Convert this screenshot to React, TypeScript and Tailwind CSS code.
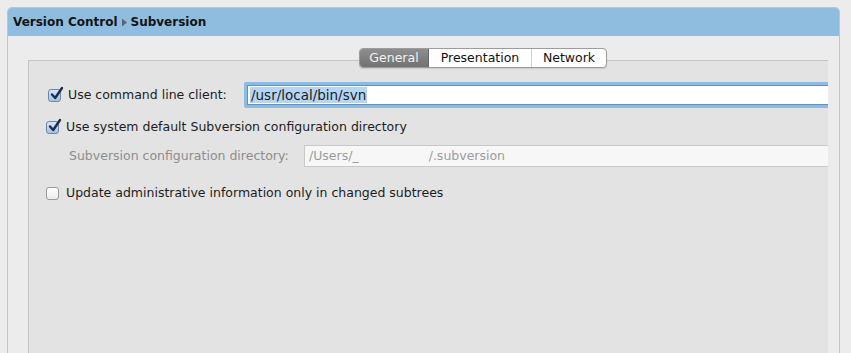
import React from 'react'

const font = { fontFamily: '"DejaVu Sans", "Liberation Sans", sans-serif' }

function Checkbox({ checked }: { checked: boolean }) {
  if (!checked) {
    return (
      <span className="inline-block w-[13px] h-[13px] rounded-[3px] border border-[#9a9a9a] bg-gradient-to-b from-white to-[#ececec] shrink-0" />
    )
  }
  return (
    <span className="relative inline-block w-[13px] h-[13px] rounded-[3px] border border-[#6c88a8] bg-gradient-to-b from-[#d6e6f6] to-[#9fc3e8] shrink-0">
      <svg className="absolute left-[1px] -top-[4px]" width="14" height="15" viewBox="0 0 14 15">
        <path d="M2 8.5 L5.2 12 L12 2" fill="none" stroke="#1d2c4a" strokeWidth="2.4" strokeLinecap="round" strokeLinejoin="round" />
      </svg>
    </span>
  )
}

export default function App() {
  return (
    <div className="w-[851px] h-[353px] overflow-hidden bg-[#ececec] pt-[7px] pl-[7px] text-[12.5px] text-[#1c1c1c]" style={font}>
      <div className="w-[833px] h-[346px] border-l border-r border-t border-[#c4c4c4] rounded-t-[5px] flex flex-col">
        {/* header */}
        <div className="h-[28px] bg-[#8fbde0] rounded-t-[4px] flex items-center pl-[5px] font-bold text-[12px] text-[#141414] shrink-0">
          <span>Version Control</span>
          <svg className="ml-[4px] mr-[4px]" width="5" height="9" viewBox="0 0 5 9">
            <path d="M0 0.5 L5 4.5 L0 8.5 Z" fill="#5c6670" />
          </svg>
          <span>Subversion</span>
        </div>

        <div className="flex-1 pl-[20px] pr-[11px] pt-[12px] flex flex-col">
          {/* tabs */}
          <div className="relative z-10 flex pl-[331px]">
            <div className="flex h-[20px] rounded-[4px] border border-[#9c9c9c] bg-white overflow-hidden shadow-[0_1px_1px_rgba(0,0,0,0.12)]">
              <div className="w-[69px] flex items-center justify-center bg-gradient-to-b from-[#8e8e8e] to-[#727272] text-[#f2f2f2] border-r border-[#6a6a6a]">General</div>
              <div className="w-[103px] flex items-center justify-center border-r border-[#d0d0d0] text-[#111]">Presentation</div>
              <div className="w-[74px] flex items-center justify-center text-[#111]">Network</div>
            </div>
          </div>

          {/* panel */}
          <div className="-mt-[8px] flex-1 bg-[#e3e3e3] border-l border-t border-[#c6c6c6] pt-[21px] flex flex-col overflow-hidden">
            <div className="h-[26px] flex items-center pl-[19px]">
              <Checkbox checked />
              <span className="ml-[7px] w-[176px]">Use command line client:</span>
              <div className="flex-1 -mr-[10px] h-[26px] p-[3px] bg-[#8dbbe1] rounded-l-[2px]">
                <div className="h-[20px] bg-white border border-[#5e93c2] flex items-center pl-[2px] text-[13.5px]">
                  <span className="bg-[#b5d5f5] leading-[16px] px-[1px]">/usr/local/bin/svn</span>
                </div>
              </div>
            </div>

            <div className="mt-[10px] h-[18px] flex items-center pl-[17px]">
              <Checkbox checked />
              <span className="ml-[7px]">Use system default Subversion configuration directory</span>
            </div>

            <div className="mt-[9px] h-[22px] flex items-center pl-[40px] text-[#8d8d8d]">
              <span className="w-[235px]">Subversion configuration directory:</span>
              <div className="flex-1 -mr-[10px] h-[22px] bg-[#f7f7f7] border border-[#c9c9c9] flex items-center pl-[4px] text-[#9b9b9b]">
                <span>/Users/_</span>
                <span className="inline-block w-[70px]" />
                <span>/.subversion</span>
              </div>
            </div>

            <div className="mt-[17px] h-[18px] flex items-center pl-[17px]">
              <Checkbox checked={false} />
              <span className="ml-[7px]">Update administrative information only in changed subtrees</span>
            </div>
          </div>
        </div>
      </div>
    </div>
  )
}
